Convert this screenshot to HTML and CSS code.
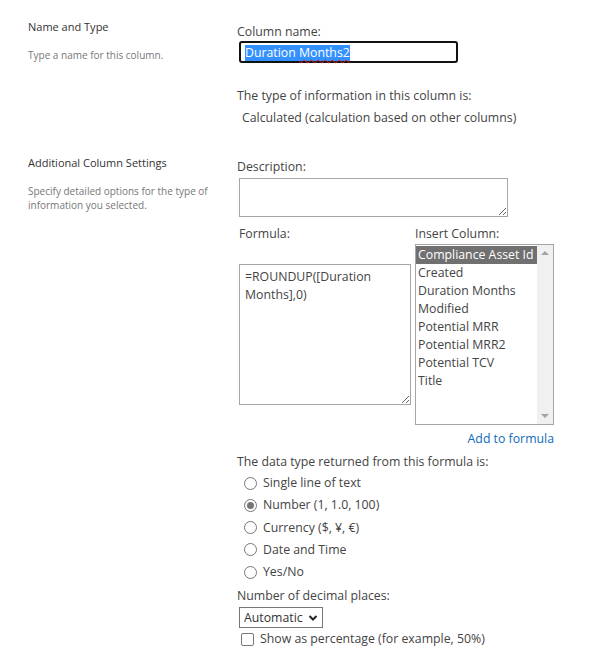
FILE: index.html
```html
<!DOCTYPE html>
<html>
<head>
<meta charset="utf-8">
<link rel="stylesheet" href="styles.css">
</head>
<body>
<div class="page">
  <section class="sec sec-1">
    <div class="left">
      <h3 class="head">Name and Type</h3>
      <p class="desc">Type a name for this column.</p>
    </div>
    <div class="right r1">
      <div class="label">Column name:</div>
      <div class="namebox"><span class="sel">Duration <span class="squig">Months2</span></span></div>
      <div class="label info">The type of information in this column is:</div>
      <div class="label calc">Calculated (calculation based on other columns)</div>
    </div>
  </section>
  <section class="sec sec-2">
    <div class="left">
      <h3 class="head">Additional Column Settings</h3>
      <p class="desc">Specify detailed options for the type of information you selected.</p>
    </div>
    <div class="right r2">
      <div class="label">Description:</div>
      <textarea class="descbox"></textarea>
      <div class="fgrid">
        <div class="label">Formula:</div>
        <div class="label">Insert Column:</div>
        <textarea class="formula">=ROUNDUP([Duration Months],0)</textarea>
        <div class="listbox">
          <div class="items">
            <div class="item selected">Compliance Asset Id</div>
            <div class="item">Created</div>
            <div class="item">Duration Months</div>
            <div class="item">Modified</div>
            <div class="item">Potential MRR</div>
            <div class="item">Potential MRR2</div>
            <div class="item">Potential TCV</div>
            <div class="item">Title</div>
          </div>
          <div class="sbar">
            <svg width="16" height="16" viewBox="0 0 16 16"><path d="M4 10 L8 6 L12 10 Z" fill="#a3a3a3"/></svg>
            <svg width="16" height="16" viewBox="0 0 16 16"><path d="M4 6 L8 10 L12 6 Z" fill="#a3a3a3"/></svg>
          </div>
        </div>
        <div></div>
        <a class="addlink">Add to formula</a>
      </div>
      <div class="label dtype">The data type returned from this formula is:</div>
      <div class="radios">
        <div class="radio"><span class="rc"></span><span class="label">Single line of text</span></div>
        <div class="radio"><span class="rc checked"></span><span class="label">Number (1, 1.0, 100)</span></div>
        <div class="radio"><span class="rc"></span><span class="label">Currency ($, ¥, €)</span></div>
        <div class="radio"><span class="rc"></span><span class="label">Date and Time</span></div>
        <div class="radio"><span class="rc"></span><span class="label">Yes/No</span></div>
      </div>
      <div class="label decimals">Number of decimal places:</div>
      <div class="select"><span>Automatic</span>
        <svg width="10" height="8" viewBox="0 0 10 8"><path d="M1.5 2 L5 5.5 L8.5 2" fill="none" stroke="#222" stroke-width="2"/></svg>
      </div>
      <div class="check"><span class="cb"></span><span class="label">Show as percentage (for example, 50%)</span></div>
    </div>
  </section>
</div>
</body>
</html>
```

FILE: styles.css
```css
html, body {
  margin: 0;
  padding: 0;
  background: #fff;
}
body {
  font-family: "Open Sans", "Noto Sans", sans-serif;
  color: #444;
}
.page {
  padding-left: 28px;
}
.sec {
  display: flex;
}
.sec-1 {
  padding-top: 18px;
}
.sec-2 {
  margin-top: 27px;
}
.left {
  width: 209px;
  flex: none;
}
.head {
  margin: 0;
  font-weight: normal;
  font-size: 11px;
  line-height: 18px;
  color: #333;
}
.desc {
  margin: 12px 0 0;
  font-size: 10px;
  line-height: 14px;
  color: #777;
  width: 190px;
}
.right {
  flex: 1;
}
.r1 {
  padding-top: 5px;
}
.r2 {
  padding-top: 4px;
}
.label {
  font-size: 12.3px;
  line-height: 18px;
  color: #444;
  white-space: nowrap;
}
.namebox {
  margin-left: 2px;
  width: 219px;
  height: 22px;
  box-sizing: border-box;
  border: 2px solid #111;
  border-radius: 3px;
  padding: 2px 0 0 4px;
  font-size: 12.3px;
  line-height: 16px;
}
.sel {
  background: #3390ff;
  color: #fff;
  display: inline-block;
  line-height: 16px;
}
.squig {
  text-decoration: underline wavy #e02020;
  text-decoration-thickness: 1px;
  text-underline-offset: 2px;
}
.info {
  margin-top: 24px;
}
.calc {
  margin-top: 4px;
  padding-left: 5px;
}
textarea {
  display: block;
  box-sizing: border-box;
  font-family: "Open Sans", "Noto Sans", sans-serif;
  font-size: 12.3px;
  line-height: 18px;
  color: #444;
  border: 1px solid #a6a6a6;
  margin: 0;
}
.descbox {
  margin: 2px 0 0 2px;
  width: 269px;
  height: 39px;
}
.fgrid {
  display: grid;
  grid-template-columns: 176px 140px;
  margin: 8px 0 0 2px;
  align-items: center;
}
.formula {
  width: 172px;
  height: 141px;
  padding: 3px 5px;
  resize: both;
}
.listbox {
  margin-top: 1px;
  width: 139px;
  height: 181px;
  box-sizing: border-box;
  border: 1px solid #a6a6a6;
  display: flex;
}
.items {
  flex: 1;
  padding-top: 1px;
  min-width: 0;
}
.item {
  font-size: 12.3px;
  line-height: 18px;
  padding-left: 2px;
  color: #444;
  white-space: nowrap;
  overflow: hidden;
}
.item.selected {
  background: #707070;
  color: #fff;
}
.sbar {
  width: 16px;
  flex: none;
  background: #f0f0f0;
  display: flex;
  flex-direction: column;
  justify-content: space-between;
}
.sbar svg {
  display: block;
}
.addlink {
  margin-top: 5px;
  text-align: right;
  font-size: 12.3px;
  line-height: 18px;
  color: #0f6cbd;
  padding-right: 1px;
}
.dtype {
  margin-top: 5px;
}
.radios {
  margin-top: 1px;
}
.radio {
  height: 22.25px;
  display: flex;
  align-items: center;
  padding-left: 7px;
}
.rc {
  width: 13px;
  height: 13px;
  box-sizing: border-box;
  border: 1px solid #767676;
  border-radius: 50%;
  margin-right: 6px;
  position: relative;
  flex: none;
}
.rc.checked::after {
  content: "";
  position: absolute;
  left: 2px;
  top: 2px;
  width: 7px;
  height: 7px;
  border-radius: 50%;
  background: #767676;
}
.decimals {
  margin-top: 4px;
}
.select {
  margin: 2px 0 0 2px;
  width: 84px;
  height: 21px;
  box-sizing: border-box;
  border: 1px solid #767676;
  display: flex;
  align-items: center;
  justify-content: space-between;
  padding: 0 4px 0 4px;
  font-size: 12.3px;
  color: #333;
}
.check {
  display: flex;
  align-items: center;
  height: 22px;
  margin-top: 0;
  padding-left: 4px;
}
.cb {
  width: 13px;
  height: 13px;
  box-sizing: border-box;
  border: 1px solid #767676;
  border-radius: 2px;
  margin-right: 6px;
  flex: none;
}
```
